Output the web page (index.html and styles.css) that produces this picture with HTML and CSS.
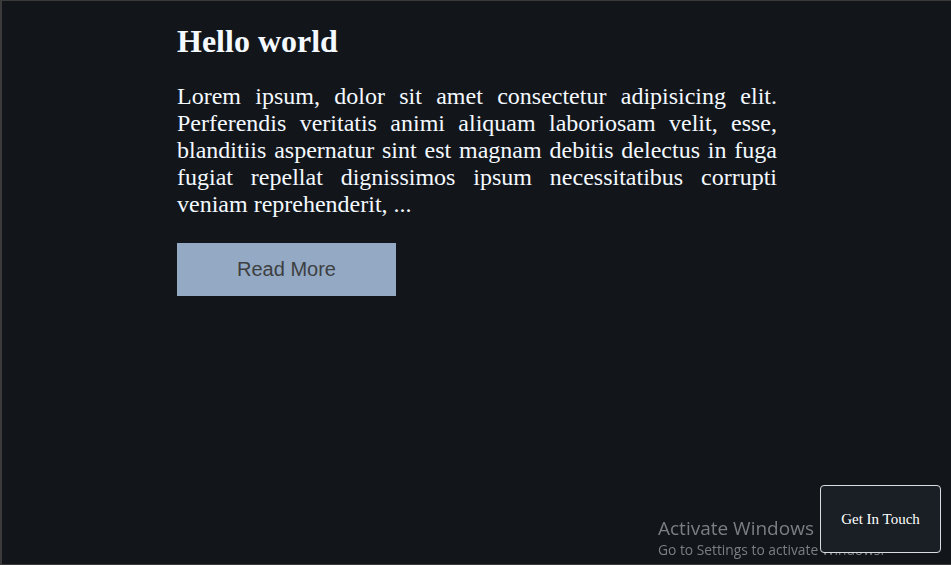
FILE: index.html
```html
<!DOCTYPE html>
<html lang="en">
<head>
<meta charset="utf-8">
<title>Hello world</title>
<link rel="stylesheet" href="styles.css">
</head>
<body>
<div class="frame">
  <main class="post">
    <h1 class="post-title">Hello world</h1>
    <p class="post-text">Lorem ipsum, dolor sit amet consectetur adipisicing elit. Perferendis veritatis animi aliquam laboriosam velit, esse, blanditiis aspernatur sint est magnam debitis delectus in fuga fugiat repellat dignissimos ipsum necessitatibus corrupti veniam reprehenderit, ...</p>
    <button class="read-more">Read More</button>
  </main>
</div>
<div class="watermark">
  <div class="wm-title">Activate Windows</div>
  <div class="wm-sub">Go to Settings to activate Windows.</div>
</div>
<button class="contact">Get In Touch</button>
</body>
</html>
```
FILE: styles.css
```css
html, body {
  margin: 0;
  padding: 0;
  height: 100%;
}
body {
  background: #12161b;
  color: #f4f9ff;
  font-family: "Liberation Serif", "Times New Roman", serif;
  overflow: hidden;
}
.frame {
  box-sizing: border-box;
  height: 100%;
  border-top: 1px solid #3a3a3a;
  border-left: 2px solid #3a3a3a;
  border-bottom: 1px solid #3a3a3a;
  padding-top: 0.1px;
}
.post {
  width: 600px;
  margin: 0 auto 0 175px;
}
.post-title {
  font-size: 32px;
  font-weight: bold;
  margin: 22px 0 21px;
}
.post-text {
  font-size: 24px;
  line-height: 27px;
  text-align: justify;
  margin: 23px 0 25px;
}
.read-more {
  display: block;
  background: #94a9c4;
  color: #3d3f42;
  border: none;
  font-family: "Liberation Sans", Arial, sans-serif;
  font-size: 20px;
  line-height: 23px;
  padding: 15px 60px;
  width: 219px;
  cursor: pointer;
}
.watermark {
  position: fixed;
  left: 658px;
  top: 515px;
  color: #7b7e82;
  font-family: "Open Sans", "Noto Sans", sans-serif;
}
.wm-title {
  font-size: 19px;
  line-height: 26px;
}
.wm-sub {
  font-size: 13.8px;
  line-height: 18px;
}
.contact {
  position: fixed;
  right: 10px;
  bottom: 12px;
  width: 121px;
  height: 68px;
  box-sizing: border-box;
  background: #1a1f26;
  color: #ffffff;
  border: 1px solid #d9dde2;
  border-radius: 4px;
  font-family: "Liberation Serif", "Times New Roman", serif;
  font-size: 15px;
  padding: 0;
  cursor: pointer;
}
```
